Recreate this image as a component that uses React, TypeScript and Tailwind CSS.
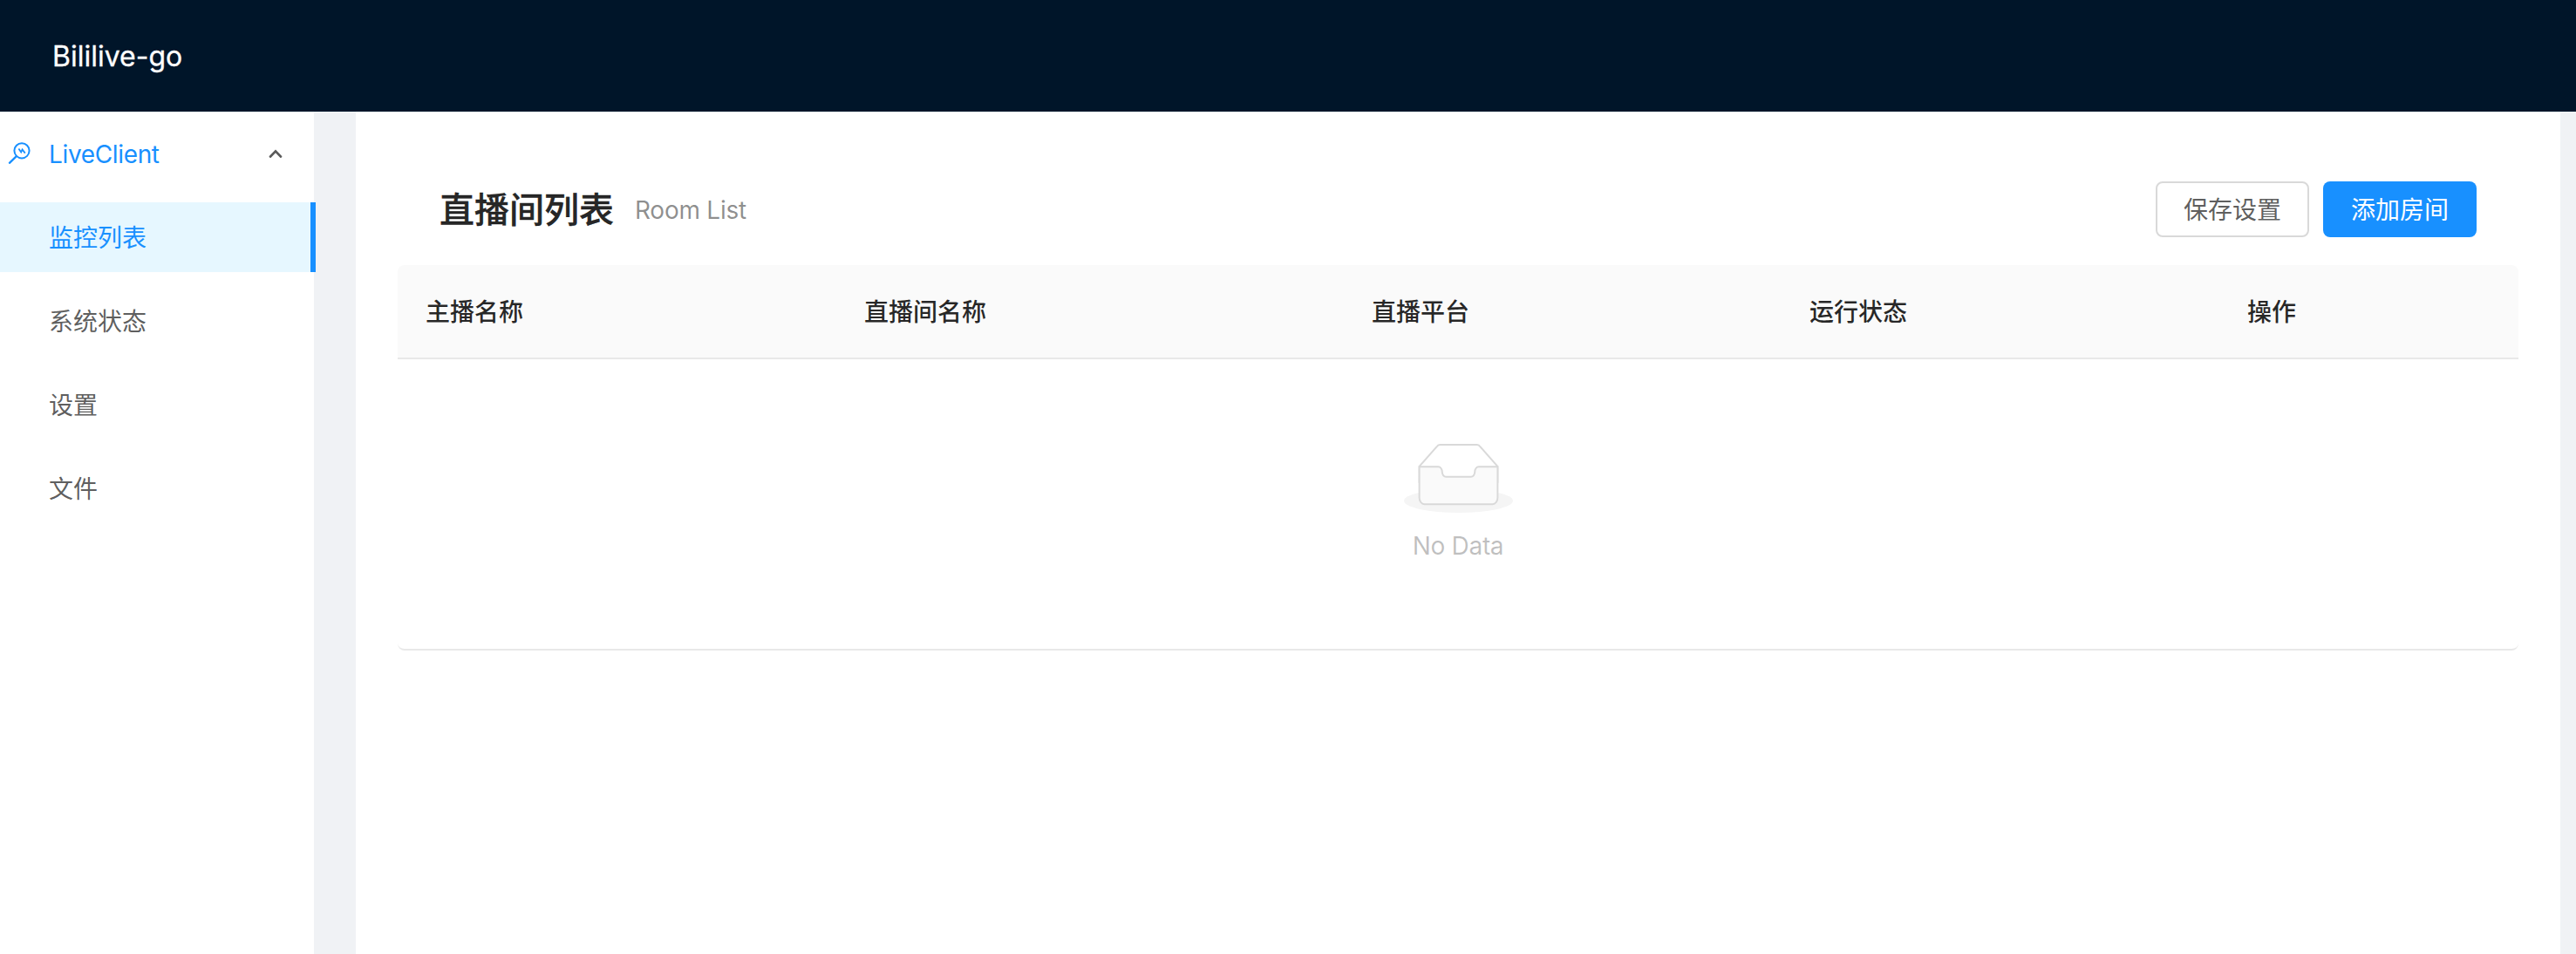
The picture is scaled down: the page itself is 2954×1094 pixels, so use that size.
const MENU_ITEMS = ['监控列表', '系统状态', '设置', '文件']

const COLUMNS = [
  { title: '主播名称', width: 'w-[503px]' },
  { title: '直播间名称', width: 'w-[582px]' },
  { title: '直播平台', width: 'w-[502px]' },
  { title: '运行状态', width: 'w-[502px]' },
  { title: '操作', width: 'w-[343px]' },
]

function MonitorIcon() {
  return (
    <svg className="w-7 h-7 shrink-0" viewBox="0 0 28 28" fill="none" stroke="currentColor">
      <circle cx="17" cy="10.8" r="8.6" strokeWidth="2" />
      <path d="M10.6 17.4 L2.9 24.8" strokeWidth="2.3" strokeLinecap="round" />
      <path d="M13.4 8.4 L16.2 12.4 L17.6 9.4 L20.8 13.6" strokeWidth="1.8" />
    </svg>
  )
}

function ArrowUp() {
  return (
    <svg className="w-4 h-3" viewBox="0 0 16 12" fill="none" stroke="#595959">
      <path d="M2 9.6 L8 3.4 L14 9.6" strokeWidth="2.8" strokeLinecap="round" />
    </svg>
  )
}

function EmptyImage() {
  return (
    <svg width="125" height="80" viewBox="0 0 64 41">
      <g transform="translate(0 1)" fill="none" fillRule="evenodd">
        <ellipse fill="#F5F5F5" cx="32" cy="33" rx="32" ry="7" />
        <g fillRule="nonzero" stroke="#D9D9D9">
          <path d="M55 12.76L44.854 1.258C44.367.474 43.656 0 42.907 0H21.093c-.749 0-1.46.474-1.947 1.257L9 12.761V22h46v-9.24z" />
          <path
            d="M41.613 15.931c0-1.605.994-2.93 2.227-2.931H55v18.137C55 33.26 53.68 35 52.05 35h-40.1C10.32 35 9 33.259 9 31.137V13h11.16c1.233 0 2.227 1.323 2.227 2.928v.022c0 1.605 1.005 2.901 2.237 2.901h14.752c1.232 0 2.237-1.308 2.237-2.913v-.007z"
            fill="#FAFAFA"
          />
        </g>
      </g>
    </svg>
  )
}

function Sidebar() {
  return (
    <aside className="w-[360px] shrink-0 bg-white pt-2">
      <div className="flex h-20 items-center pl-2 pr-[36px] text-[#1890ff]">
        <MonitorIcon />
        <span className="ml-5 flex-1 pt-0.5 tracking-[-0.35px]">LiveClient</span>
        <ArrowUp />
      </div>
      <ul className="mt-4 flex flex-col gap-4">
        {MENU_ITEMS.map((item, i) => (
          <li
            key={item}
            className={`flex h-20 items-center pl-14 pt-0.5 ${
              i === 0 ? 'relative w-[362px] border-r-6 border-[#1890ff] bg-[#e6f7ff] text-[#1890ff]' : ''
            }`}
          >
            {item}
          </li>
        ))}
      </ul>
    </aside>
  )
}

function RoomTable() {
  return (
    <div className="h-[442px] rounded-lg border-b-2 border-[#e8e8e8]">
      <div className="flex h-[108px] items-center rounded-t-lg border-b-2 border-[#e8e8e8] bg-[#fafafa] pt-0.5 font-medium text-black/85">
        {COLUMNS.map(col => (
          <div key={col.title} className={`pl-8 ${col.width}`}>
            {col.title}
          </div>
        ))}
      </div>
      <div className="flex flex-col items-center pt-24 text-black/25">
        <EmptyImage />
        <p className="mt-4 leading-[44px] tracking-[-0.3px]">No Data</p>
      </div>
    </div>
  )
}

export default function App() {
  return (
    <div className="flex h-[1094px] flex-col bg-[#f0f2f5] font-['Inter','Noto_Sans_CJK_SC',sans-serif] text-[28px] leading-[42px] text-black/65">
      <header className="flex h-32 shrink-0 items-center bg-[#001529] pl-[60px] pt-0.5 text-[32px] text-white [-webkit-text-stroke:0.3px]">
        Bililive-go
      </header>
      <div className="flex min-h-0 flex-1">
        <Sidebar />
        <main className="ml-12 mr-[18px] flex-1 bg-white px-12 pt-12">
          <div className="flex h-32 items-center px-12">
            <h1 className="pt-0.5 text-[40px] font-medium text-black/85 [-webkit-text-stroke:0.4px]">直播间列表</h1>
            <span className="ml-6 flex-1 pt-0.5 tracking-[-0.25px] text-black/45">Room List</span>
            <div className="flex gap-4">
              <button className="h-16 w-44 rounded-lg border-2 border-[#d9d9d9] bg-white pt-0.5">保存设置</button>
              <button className="h-16 w-44 rounded-lg bg-[#1890ff] pt-0.5 text-white">添加房间</button>
            </div>
          </div>
          <RoomTable />
        </main>
      </div>
    </div>
  )
}
